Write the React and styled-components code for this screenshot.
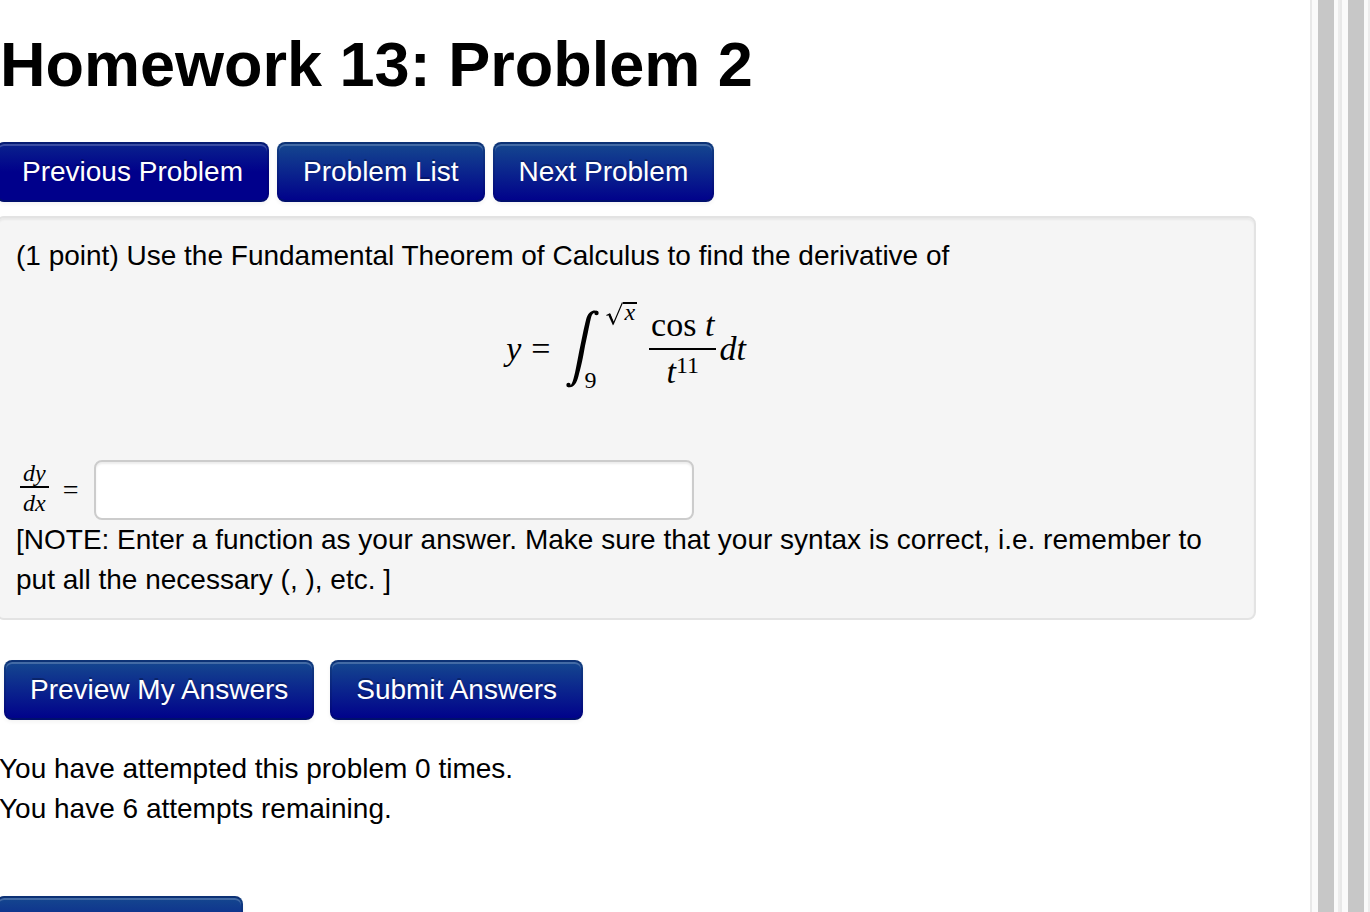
import styled, { createGlobalStyle, css } from 'styled-components';

const GlobalStyle = createGlobalStyle`
  * {
    box-sizing: border-box;
  }
  body {
    margin: 0;
    background: #fff;
    color: #000;
    font-family: "Liberation Sans", Helvetica, Arial, sans-serif;
    font-size: 28px;
    line-height: 40px;
  }
`

const Layout = styled.div`
  display: flex;
  height: 100vh;
  overflow: hidden;
`

const Main = styled.main`
  flex: 1;
  min-width: 0;
  margin-left: -4px;
  padding: 24px 54px 0 0;
`

const Title = styled.h1`
  margin: 0;
  padding-left: 4px;
  font-size: 63px;
  line-height: 80px;
  font-weight: bold;
`

const ButtonRow = styled.div`
  display: flex;
  gap: ${({ $gap }) => $gap || 8}px;
`

const Nav = styled.nav`
  margin: 38px 0 14px;
`

const buttonLook = css`
  display: block;
  padding: 8px 24px;
  border: 2px solid;
  border-color: rgba(0, 20, 80, 0.4) rgba(0, 0, 0, 0.1) rgba(0, 30, 80, 0.5);
  border-radius: 8px;
  background: #00008b linear-gradient(to bottom, #15498f, #00008b) repeat-x border-box;
  background-position: 0 ${({ $active }) => ($active ? '-30px' : '0')};
  box-shadow: inset 0 2px 0 rgba(255, 255, 255, 0.2), 0 2px 4px rgba(0, 0, 0, 0.05);
  color: #fff;
  font: inherit;
  text-decoration: none;
  text-shadow: 0 -2px 0 rgba(0, 0, 0, 0.25);
  white-space: nowrap;
  cursor: pointer;
`

const ButtonLink = styled.a`
  ${buttonLook}
`

const Button = styled.button`
  ${buttonLook}
`

const Problem = styled.section`
  padding: 18px;
  border: 2px solid #e3e3e3;
  border-radius: 8px;
  background: #f5f5f5;
  box-shadow: inset 0 2px 2px rgba(0, 0, 0, 0.05);

  p {
    margin: 0;
  }
`

const Equation = styled.div`
  display: flex;
  justify-content: center;
  align-items: center;
  height: 94px;
  margin: 26px 0 64px;
  font-family: "Liberation Serif", "Times New Roman", serif;
  font-size: 34px;
`

const Relation = styled.span`
  margin: 0 16px 0 10px;
`

const Limits = styled.div`
  display: flex;
  flex-direction: column;
  align-self: flex-start;
  justify-content: space-between;
  height: 90px;
  margin: 0 12px 0 -15px;
  font-size: 24px;
  line-height: 24px;
`

const Root = styled.span`
  display: flex;
  align-items: flex-start;
  margin-left: 22px;
  line-height: 16px;
`

const Radicand = styled.i`
  padding: 0 2px 0 1px;
  border-top: 2px solid #000;
`

const Fraction = styled.span`
  display: flex;
  flex-direction: column;
  align-items: center;
`

const Numerator = styled.span`
  padding: 0 2px 2px;
  border-bottom: 2px solid #000;
  line-height: 42px;
`

const Denominator = styled.span`
  line-height: 44px;

  sup {
    font-size: 24px;
    line-height: 0;
    vertical-align: 10px;
  }
`

const SmallFraction = styled(Fraction)`
  font-size: 24px;

  ${Numerator} {
    padding: 0 3px 2px;
    line-height: 22px;
  }
  ${Denominator} {
    line-height: 30px;
  }
`

const Differential = styled.i`
  margin-left: 3px;
`

const AnswerRow = styled.div`
  display: flex;
  align-items: center;
  height: 60px;
  padding-left: 4px;
`

const AnswerLabel = styled.label`
  display: flex;
  align-items: center;
  gap: 14px;
  margin-right: 16px;
  font-family: "Liberation Serif", "Times New Roman", serif;
`

const AnswerInput = styled.input`
  width: 600px;
  height: 60px;
  padding: 8px 12px;
  border: 2px solid #ccc;
  border-radius: 8px;
  background: #fff;
  box-shadow: inset 0 2px 2px rgba(0, 0, 0, 0.075);
  font: inherit;
`

const Actions = styled.div`
  margin: 40px 0 29px 8px;
`

const Attempts = styled.p`
  margin: 0 0 67px;
  padding-left: 3px;
`

const ScrollRail = styled.div`
  flex: none;
  width: 30px;
  border-left: 2px solid #e8e8e8;
  border-right: 2px solid #ececec;
  background: #fafafa;
  padding: 0 4px 0 6px;
`

const ScrollThumb = styled.div`
  height: 100%;
  background: #c7c7c7;
`

const IntegralSign = () => (
  <svg width="33" height="78" viewBox="0 0 33 78" aria-label="integral">
    <path d="M31.500 1C28-.5 23 .5 20.500 8C18 17 15 33 12.500 45C10 58 8 69 6 73C5 75.500 4 76 2 75.500L2 77C7 78.500 10.500 74 12.500 66C15 57 17 48 19 36C22 23 23.500 13 25.500 6C27 2.500 29 2 31.500 3.500Z" />
    <circle cx="30.500" cy="3" r="2.200" />
    <circle cx="2.500" cy="75" r="2.200" />
  </svg>
)

const RadicalSign = () => (
  <svg width="17" height="24" viewBox="0 0 17 24" aria-label="square root">
    <path d="M.5 13.500L3.500 12L7.500 21.500L16.500 .5" fill="none" stroke="#000" strokeWidth="1.200" />
    <path d="M2 12.500L4.300 11.500L8 20.500L7 23.500Z" />
  </svg>
)

export default function App() {
  return (
    <>
      <GlobalStyle />
      <Layout>
        <Main>
          <Title>Homework 13: Problem 2</Title>
          <Nav>
            <ButtonRow>
              <ButtonLink href="#previous" $active>Previous Problem</ButtonLink>
              <ButtonLink href="#list">Problem List</ButtonLink>
              <ButtonLink href="#next">Next Problem</ButtonLink>
            </ButtonRow>
          </Nav>
          <Problem>
            <p>(1 point) Use the Fundamental Theorem of Calculus to find the derivative of</p>
            <Equation>
              <i>y</i>
              <Relation>=</Relation>
              <IntegralSign />
              <Limits>
                <Root>
                  <RadicalSign />
                  <Radicand>x</Radicand>
                </Root>
                <span>9</span>
              </Limits>
              <Fraction>
                <Numerator>cos <i>t</i></Numerator>
                <Denominator><i>t</i><sup>11</sup></Denominator>
              </Fraction>
              <Differential>dt</Differential>
            </Equation>
            <AnswerRow>
              <AnswerLabel htmlFor="answer">
                <SmallFraction>
                  <Numerator><i>dy</i></Numerator>
                  <Denominator><i>dx</i></Denominator>
                </SmallFraction>
                <span>=</span>
              </AnswerLabel>
              <AnswerInput id="answer" type="text" />
            </AnswerRow>
            <p>
              [NOTE: Enter a function as your answer. Make sure that your syntax is correct, i.e. remember to
              put all the necessary (, ), etc. ]
            </p>
          </Problem>
          <Actions>
            <ButtonRow $gap={16}>
              <Button type="button">Preview My Answers</Button>
              <Button type="button">Submit Answers</Button>
            </ButtonRow>
          </Actions>
          <Attempts>
            You have attempted this problem 0 times.<br />
            You have 6 attempts remaining.
          </Attempts>
          <Button type="button">Email Instructor</Button>
        </Main>
        <ScrollRail><ScrollThumb /></ScrollRail>
        <ScrollRail><ScrollThumb /></ScrollRail>
      </Layout>
    </>
  )
}
